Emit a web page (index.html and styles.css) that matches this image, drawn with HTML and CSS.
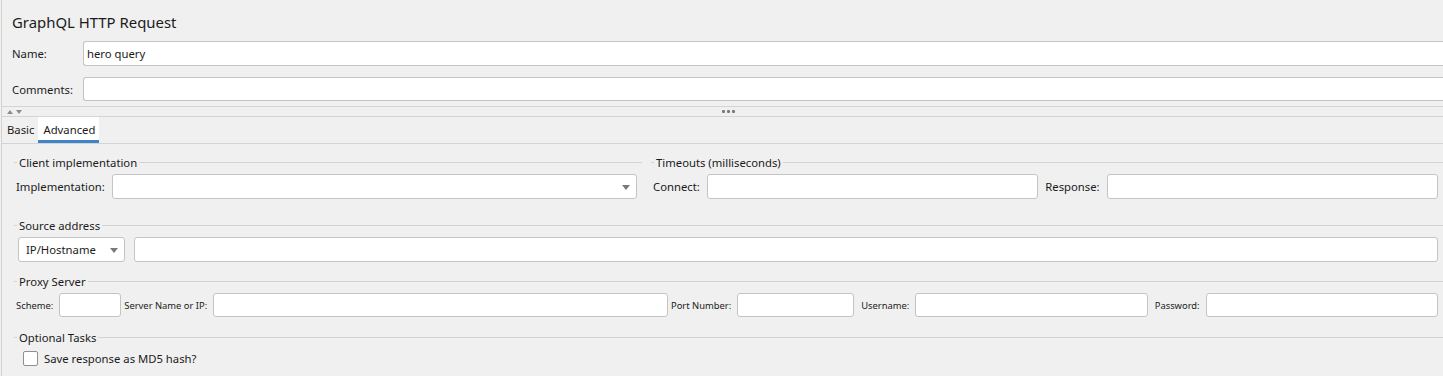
FILE: index.html
```html
<!DOCTYPE html>
<html lang="en">
<head>
  <meta charset="UTF-8">
  <title>GraphQL HTTP Request</title>
  <link rel="stylesheet" href="styles.css">
</head>
<body>
<div class="page">
  <div class="header">
    <h1 class="title">GraphQL HTTP Request</h1>
    <div class="field-row">
      <label class="field-label">Name:</label>
      <div class="input">hero query</div>
    </div>
    <div class="field-row comments">
      <label class="field-label">Comments:</label>
      <div class="input"></div>
    </div>
  </div>

  <div class="splitter">
    <div class="arrows">
      <span class="tri up"></span>
      <span class="tri down"></span>
    </div>
    <div class="grip"><span></span><span></span><span></span></div>
  </div>

  <div class="tabs">
    <div class="tab">Basic</div>
    <div class="tab active">Advanced</div>
  </div>

  <div class="panel">
    <div class="cols">
      <section class="group">
        <div class="group-title"><span>Client implementation</span></div>
        <div class="row">
          <label class="lbl">Implementation:</label>
          <div class="select wide"><span class="caret"></span></div>
        </div>
      </section>
      <section class="group">
        <div class="group-title"><span>Timeouts (milliseconds)</span></div>
        <div class="row timeouts">
          <label class="lbl">Connect:</label>
          <div class="input grow"></div>
          <label class="lbl response">Response:</label>
          <div class="input grow"></div>
        </div>
      </section>
    </div>

    <section class="group source">
      <div class="group-title"><span>Source address</span></div>
      <div class="row">
        <div class="select ip">IP/Hostname<span class="caret"></span></div>
        <div class="input grow"></div>
      </div>
    </section>

    <section class="group proxy">
      <div class="group-title"><span>Proxy Server</span></div>
      <div class="row small">
        <label class="lbl">Scheme:</label>
        <div class="input scheme"></div>
        <label class="lbl">Server Name or IP:</label>
        <div class="input server"></div>
        <label class="lbl">Port Number:</label>
        <div class="input port"></div>
        <label class="lbl">Username:</label>
        <div class="input user"></div>
        <label class="lbl">Password:</label>
        <div class="input pass"></div>
      </div>
    </section>

    <section class="group tasks">
      <div class="group-title"><span>Optional Tasks</span></div>
      <label class="check-row">
        <span class="checkbox"></span>
        Save response as MD5 hash?
      </label>
    </section>
  </div>
</div>
</body>
</html>
```

FILE: styles.css
```css
body {
  margin: 0;
  background: #f0f0f0;
  font-family: "Noto Sans", sans-serif;
  font-size: 11.3px;
  color: #1b1b1b;
}
.page {
  border-left: 1px solid #d2d2d2;
  margin-left: 1px;
  height: 376px;
  overflow: hidden;
}
.header {
  padding: 0 0 0 10px;
}
.title {
  margin: 0;
  height: 41px;
  line-height: 44px;
  font-size: 14.9px;
  font-weight: normal;
}
.field-row {
  display: flex;
  align-items: center;
}
.field-label {
  width: 71px;
  flex: none;
}
.field-row .input {
  flex: 1;
  height: 23px;
  line-height: 23px;
  padding-left: 3px;
  border-right: none;
  border-radius: 3px 0 0 3px;
}
.field-row.comments {
  margin-top: 11px;
}
.field-row.comments .input {
  height: 22px;
}
.input {
  background: #fff;
  border: 1px solid #c4c4c4;
  border-radius: 3px;
  box-sizing: content-box;
}
.splitter {
  margin-top: 5px;
  height: 9px;
  border-top: 1px solid #d4d4d4;
  border-bottom: 1px solid #d4d4d4;
  display: flex;
  align-items: center;
  position: relative;
}
.arrows {
  display: flex;
  gap: 3px;
  padding-left: 5px;
}
.tri {
  width: 0;
  height: 0;
  border-left: 3px solid transparent;
  border-right: 3px solid transparent;
}
.tri.up {
  border-bottom: 4px solid #8c8c8c;
}
.tri.down {
  border-top: 4px solid #8c8c8c;
}
.grip {
  position: absolute;
  left: 720px;
  top: 3px;
  display: flex;
  gap: 2px;
}
.grip span {
  width: 3px;
  height: 3px;
  background: #7a7a7a;
  border-radius: 1px;
}
.tabs {
  display: flex;
  height: 26px;
  border-bottom: 1px solid #d4d4d4;
  padding-left: 0;
}
.tab {
  padding: 0 4px 0 5px;
  line-height: 26px;
}
.tab.active {
  background: #fff;
  box-shadow: inset 0 -3px 0 #3f83c9;
}
.panel {
  padding: 10px 5px 0 12px;
}
.cols {
  display: grid;
  grid-template-columns: 623px 1fr;
  gap: 14px;
}
.group-title {
  display: flex;
  align-items: center;
  height: 16px;
}
.group-title::before {
  content: "";
  width: 3px;
  border-top: 1px solid #d4d4d4;
  margin-right: 2px;
}
.group-title::after {
  content: "";
  flex: 1;
  border-top: 1px solid #d4d4d4;
  margin-left: 2px;
  margin-right: -5px;
}
.row {
  display: flex;
  align-items: center;
  margin-top: 4px;
}
.row .lbl {
  flex: none;
}
.row > .lbl:first-child {
  margin-left: 2px;
}
.select {
  background: #fff;
  border: 1px solid #c4c4c4;
  border-radius: 3px;
  height: 23px;
  position: relative;
}
.select.wide {
  flex: 1;
  margin-left: 7px;
}
.caret {
  position: absolute;
  right: 6px;
  top: 10px;
  width: 0;
  height: 0;
  border-left: 4px solid transparent;
  border-right: 4px solid transparent;
  border-top: 5px solid #7a7a7a;
}
.row .input {
  height: 23px;
}
.grow {
  flex: 1;
}
.timeouts .input {
  margin-left: 7px;
}
.timeouts .response {
  margin-left: 7px;
}
.source {
  margin-top: 18px;
}
.select.ip {
  width: 98px;
  margin-left: 4px;
  padding-left: 7px;
  line-height: 23px;
  flex: none;
}
.source .input {
  margin-left: 9px;
}
.proxy {
  margin-top: 11px;
}
.row.small {
  font-size: 9.4px;
}
.row.small .input {
  height: 22px;
  margin-left: 6px;
  margin-right: 3px;
}
.input.scheme { width: 60px; }
.input.server { flex: 456; }
.input.port { width: 115px; flex: none; margin-right: 7px !important; }
.input.user { flex: 232; margin-right: 7px !important; }
.input.pass { flex: 232; margin-right: 0 !important; }
.tasks {
  margin-top: 12px;
}
.check-row {
  display: flex;
  align-items: center;
  gap: 6px;
  margin-top: 6px;
  margin-left: 9px;
}
.checkbox {
  width: 13px;
  height: 13px;
  background: #fff;
  border: 1px solid #8f8f8f;
  border-radius: 2px;
}
```
